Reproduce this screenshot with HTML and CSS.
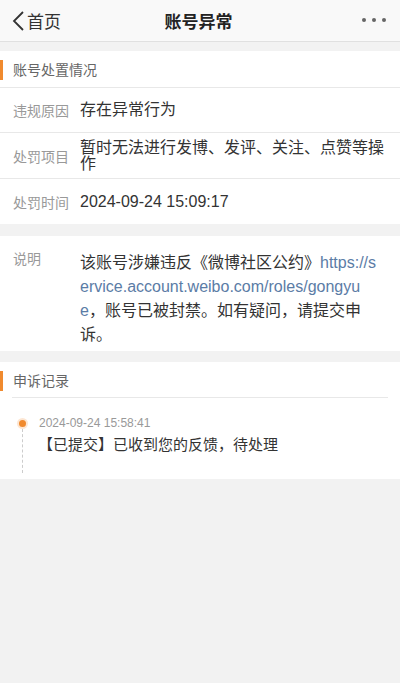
FILE: index.html
```html
<!DOCTYPE html>
<html lang="zh">
<head>
<meta charset="utf-8">
<title>账号异常</title>
<link rel="stylesheet" href="styles.css">
</head>
<body>
<header class="nav">
  <div class="nav-left">
    <svg class="back" width="14" height="22" viewBox="0 0 14 22"><path d="M12 2 L3 11 L12 20" fill="none" stroke="#333" stroke-width="1.8"/></svg>
    <span class="back-text">首页</span>
  </div>
  <div class="nav-title">账号异常</div>
  <div class="nav-right">
    <span class="dot"></span><span class="dot"></span><span class="dot"></span>
  </div>
</header>

<section class="card">
  <div class="sec-title"><span class="bar"></span>账号处置情况</div>
  <div class="row"><span class="label">违规原因</span><span class="value">存在异常行为</span></div>
  <div class="row row-multi"><span class="label">处罚项目</span><span class="value tight">暂时无法进行发博、发评、关注、点赞等操作</span></div>
  <div class="row row-last"><span class="label">处罚时间</span><span class="value">2024-09-24 15:09:17</span></div>
</section>

<section class="card desc">
  <span class="label desc-label">说明</span>
  <p class="desc-text">该账号涉嫌违反《微博社区公约》<span class="link">https://service.account.weibo.com/roles/gongyue</span>，账号已被封禁。如有疑问，请提交申诉。</p>
</section>

<section class="card appeal">
  <div class="sec-title sec-title-2"><span class="bar"></span>申诉记录</div>
  <div class="timeline">
    <div class="tl-axis"><span class="tl-dot"></span><span class="tl-line"></span></div>
    <div class="tl-body">
      <div class="tl-date">2024-09-24 15:58:41</div>
      <div class="tl-text">【已提交】已收到您的反馈，待处理</div>
    </div>
  </div>
</section>
</body>
</html>
```
FILE: styles.css
```css
* { box-sizing: border-box; }
html, body { margin: 0; padding: 0; }
body {
  background: #f2f2f2;
  font-family: "Liberation Sans", "Noto Sans CJK SC", sans-serif;
  color: #333;
  width: 400px;
  min-height: 683px;
}
.nav {
  height: 42px;
  background: #f9f9f9;
  border-bottom: 1px solid #e0e0e0;
  display: flex;
  align-items: center;
  justify-content: space-between;
  padding: 0 14px 0 11px;
}
.nav-left { display: flex; align-items: center; width: 80px; }
.back { display: block; margin-right: 2px; }
.back-text { font-size: 17px; color: #333; }
.nav-title {
  font-size: 17px;
  font-weight: bold;
  color: #222;
}
.nav-right { width: 80px; display: flex; justify-content: flex-end; gap: 6px; padding-bottom: 2px; }
.dot { width: 4px; height: 4px; border-radius: 50%; background: #666; }

.card { background: #fff; margin-top: 9px; }
.sec-title {
  height: 37px;
  display: flex;
  align-items: center;
  font-size: 14px;
  color: #666;
  border-bottom: 1px solid #e8e8e8;
  position: relative;
  padding-left: 13px;
}
.bar {
  position: absolute;
  left: 0; top: 9px;
  width: 3px; height: 20px;
  background: #f08a2e;
}
.row {
  display: flex;
  align-items: center;
  min-height: 45px;
  border-bottom: 1px solid #e8e8e8;
  padding: 0 12px 0 13px;
}
.row-multi { min-height: 46px; }
.row-last { border-bottom: none; }
.label { font-size: 14px; color: #999; width: 67px; flex-shrink: 0; }
.value { font-size: 16px; color: #333; line-height: 20px; }
.tight { line-height: 16px; }

.desc {
  margin-top: 12px;
  display: flex;
  padding: 13px 19px 0 13px;
  height: 115px;
}
.desc-label { line-height: 20px; }
.desc-text {
  margin: 2px 0 0 0;
  font-size: 16px;
  line-height: 24px;
  color: #333;
  word-break: break-all;
}
.link { color: #5b7ca6; }

.appeal { margin-top: 11px; padding-bottom: 6px; }
.sec-title-2 { border-bottom: none; height: 36px; }
.sec-title-2::after {
  content: "";
  position: absolute;
  left: 12px; right: 12px; bottom: 0;
  height: 1px;
  background: #e8e8e8;
}
.timeline { display: flex; padding: 17px 0 0 19px; }
.tl-axis { width: 7px; display: flex; flex-direction: column; align-items: center; margin-right: 13px; }
.tl-dot { width: 7px; height: 7px; border-radius: 50%; background: #f08a2e; box-shadow: 0 0 0 2px #fde6d2; margin-top: 5px; }
.tl-line { width: 0; height: 44px; border-left: 1px dashed #ccc; margin-top: 2px; }
.tl-date { font-size: 12px; color: #999; line-height: 16px; }
.tl-text { font-size: 15px; color: #333; margin-top: 4px; margin-left: -1px; line-height: 20px; }
```
